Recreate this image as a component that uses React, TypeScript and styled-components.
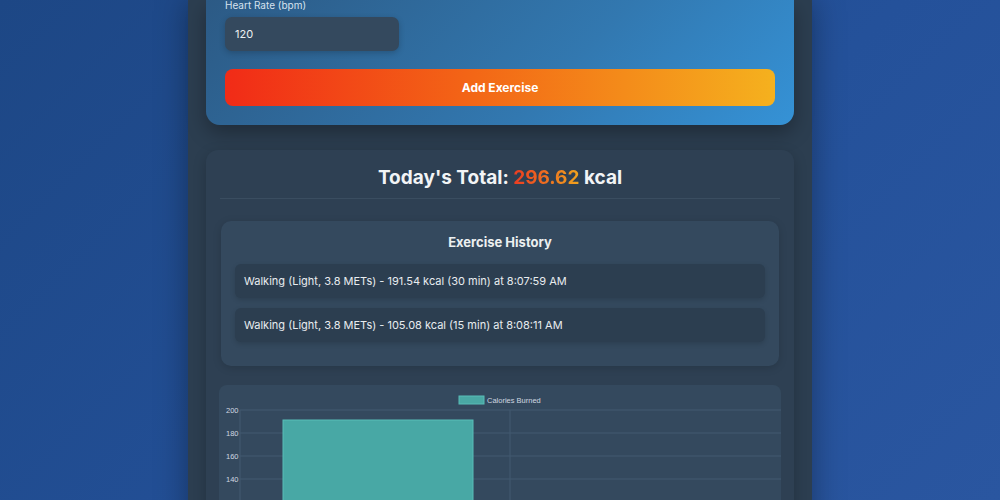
import React from "react";
import styled, { createGlobalStyle } from "styled-components";

const Global = createGlobalStyle`
  html, body { margin: 0; height: 500px; overflow: hidden; }
  body {
    font-family: Inter, "Noto Sans", sans-serif;
    background: linear-gradient(135deg, #1d4785 0%, #24519a 60%, #2a56a0 100%);
    color: #ecf0f1;
  }
`;

const Column = styled.div`
  width: 624px;
  margin: 0 auto;
  min-height: 500px;
  background: #2c3e50;
  box-shadow: 0 0 30px rgba(0, 0, 0, 0.35);
  padding: 0 18px;
  box-sizing: border-box;
`;

const FormCard = styled.div`
  background: linear-gradient(135deg, #2c5a85 0%, #3278b0 60%, #3592d6 100%);
  border-radius: 0 0 14px 14px;
  padding: 0 19px 19px;
  box-shadow: 0 8px 20px rgba(0, 0, 0, 0.3);
`;

const Label = styled.div`
  font-size: 10px;
  color: #d6e2ee;
  line-height: 11px;
`;

const Input = styled.input`
  display: block;
  width: 174px;
  height: 34px;
  margin-top: 6px;
  box-sizing: border-box;
  border: none;
  border-radius: 7px;
  background: #34495e;
  color: #ecf0f1;
  font: 11px Inter, sans-serif;
  padding: 0 10px;
  box-shadow: 0 2px 6px rgba(0, 0, 0, 0.2);
`;

const Button = styled.button`
  display: block;
  width: 100%;
  height: 37px;
  margin-top: 18px;
  border: none;
  border-radius: 8px;
  background: linear-gradient(90deg, #f12b17 0%, #f36616 45%, #f5b11e 100%);
  color: #fff;
  font: 700 12px Inter, sans-serif;
`;

const TotalCard = styled.div`
  margin-top: 25px;
  background: #2e4053;
  border-radius: 12px;
  padding: 14px 14px 18px;
  box-shadow: 0 4px 14px rgba(0, 0, 0, 0.2);
`;

const Total = styled.h2`
  margin: 0;
  text-align: center;
  font-size: 19px;
  font-weight: 700;
  line-height: 28px;
  padding-bottom: 6px;
  border-bottom: 1px solid #3a4d60;
  color: #f2f4f6;
`;

const Num = styled.span`
  background: linear-gradient(90deg, #ec3b22, #f0a31e);
  -webkit-background-clip: text;
  color: transparent;
`;

const History = styled.div`
  margin: 22px 1px 0;
  background: #34495e;
  border-radius: 10px;
  padding: 12px 14px 24px;
  box-shadow: 0 2px 8px rgba(0, 0, 0, 0.15);
`;

const HistTitle = styled.h3`
  margin: 0 0 13px;
  text-align: center;
  font-size: 13px;
  font-weight: 700;
  line-height: 18px;
`;

const Item = styled.div`
  background: #2c3e50;
  border-radius: 6px;
  height: 34px;
  display: flex;
  align-items: center;
  padding: 0 9px;
  font-size: 11px;
  color: #e8ecef;
  margin-bottom: 10px;
  box-shadow: 0 2px 5px rgba(0, 0, 0, 0.15);
  &:last-child { margin-bottom: 0; }
`;

const ChartBox = styled.div`
  margin: 19px -1px 0;
  background: #34495e;
  border-radius: 8px;
  height: 140px;
  overflow: hidden;
`;

const Chart = () => (
  <svg width="562" height="140" style={{ display: "block" }}>
    <rect x="240" y="11" width="25" height="8" fill="#4aa8a4" stroke="#59bdb7" />
    <text x="268" y="18" fontSize="7.5" fill="#d0d8e0" fontFamily="Liberation Sans, sans-serif">Calories Burned</text>
    {[200, 180, 160, 140].map((v, i) => (
      <g key={v}>
        <line x1="21" x2="562" y1={25 + i * 23} y2={25 + i * 23} stroke="#425a70" />
        <text x="7" y={28 + i * 23} fontSize="7.5" fill="#d0d8e0" fontFamily="Liberation Sans, sans-serif">{v}</text>
      </g>
    ))}
    <line x1="21" x2="21" y1="25" y2="140" stroke="#425a70" />
    <line x1="291" x2="291" y1="25" y2="140" stroke="#425a70" />
    <rect x="64" y="35" width="190" height="110" fill="#48a8a5" stroke="#59bdb7" />
  </svg>
);

export default function App() {
  return (
    <>
      <Global />
      <Column>
        <FormCard>
          <Label>Heart Rate (bpm)</Label>
          <Input defaultValue="120" />
          <Button>Add Exercise</Button>
        </FormCard>
        <TotalCard>
          <Total>
            Today's Total: <Num>296.62</Num> kcal
          </Total>
          <History>
            <HistTitle>Exercise History</HistTitle>
            <Item>Walking (Light, 3.8 METs) - 191.54 kcal (30 min) at 8:07:59 AM</Item>
            <Item>Walking (Light, 3.8 METs) - 105.08 kcal (15 min) at 8:08:11 AM</Item>
          </History>
          <ChartBox>
            <Chart />
          </ChartBox>
        </TotalCard>
      </Column>
    </>
  );
}
